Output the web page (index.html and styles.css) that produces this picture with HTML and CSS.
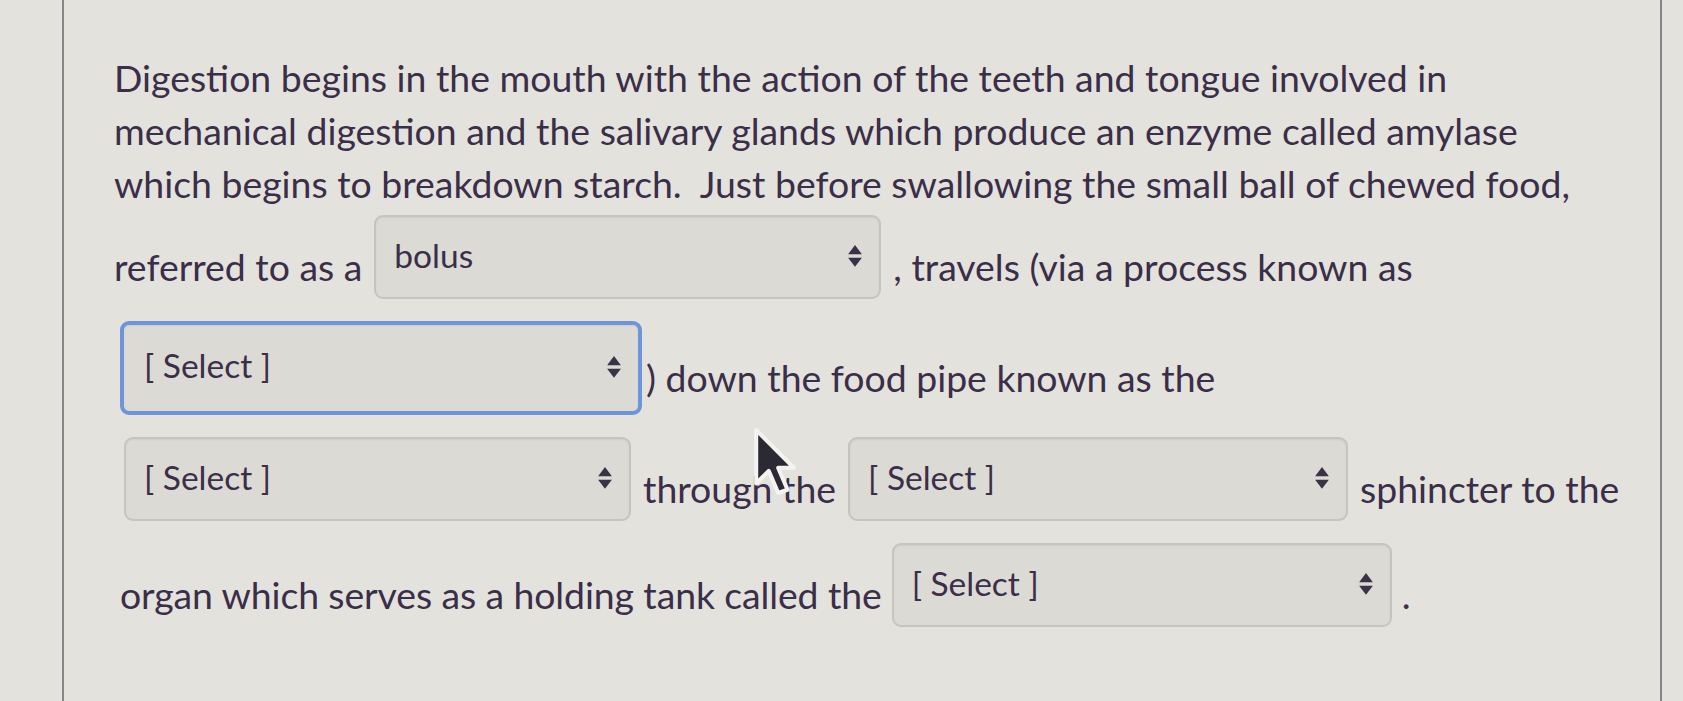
FILE: index.html
```html
<!DOCTYPE html>
<html lang="en">
<head>
  <meta charset="UTF-8" />
  <title>Digestion quiz</title>
  <link rel="stylesheet" href="styles.css">
</head>
<body>
  <div class="panel">
    <p class="text">Digestion begins in the mouth with the action of the teeth and tongue involved in<br>
      mechanical digestion and the salivary glands which produce an enzyme called amylase<br>
      which begins to breakdown starch.&nbsp; Just before swallowing the small ball of chewed food,</p>

    <div class="row">
      <span>referred to as a</span>
      <div class="select">
        <span>bolus</span>
        <svg class="arrows" viewBox="0 0 12 20"><path d="M6 0 L12 8 H0 Z M0 11 H12 L6 19 Z"/></svg>
      </div>
      <span>, travels (via a process known as</span>
    </div>

    <div class="row tight">
      <div class="select focused">
        <span>[ Select ]</span>
        <svg class="arrows" viewBox="0 0 12 20"><path d="M6 0 L12 8 H0 Z M0 11 H12 L6 19 Z"/></svg>
      </div>
      <span>) down the food pipe known as the</span>
    </div>

    <div class="row indent">
      <div class="select">
        <span>[ Select ]</span>
        <svg class="arrows" viewBox="0 0 12 20"><path d="M6 0 L12 8 H0 Z M0 11 H12 L6 19 Z"/></svg>
      </div>
      <span>through the</span>
      <div class="select short">
        <span>[ Select ]</span>
        <svg class="arrows" viewBox="0 0 12 20"><path d="M6 0 L12 8 H0 Z M0 11 H12 L6 19 Z"/></svg>
      </div>
      <span>sphincter to the</span>
    </div>

    <div class="row indent-more">
      <span>organ which serves as a holding tank called the</span>
      <div class="select short">
        <span>[ Select ]</span>
        <svg class="arrows" viewBox="0 0 12 20"><path d="M6 0 L12 8 H0 Z M0 11 H12 L6 19 Z"/></svg>
      </div>
      <span>.</span>
    </div>
  </div>

  <!-- mouse pointer -->
  <svg class="cursor" viewBox="0 0 14 22">
    <path d="M1 1 V18 L5 14 L8 21 L11 20 L8 13 H13 Z" fill="#2b2a33" stroke="#f4f3f1" stroke-width="1.3" stroke-linejoin="round"/>
  </svg>
</body>
</html>
```

FILE: styles.css
```css
* {
  box-sizing: border-box;
}

body {
  margin: 0;
  height: 701px;
  overflow: hidden;
  background: #e4e2dd;
  font-family: 'Lato', 'Open Sans', sans-serif;
  color: #3a2e48;
  position: relative;
}

.panel {
  margin-left: 62px;
  width: 1600px;
  height: 701px;
  border-left: 2px solid #8a8489;
  border-right: 2px solid #8a8489;
  padding: 51px 0 0 50px;
}

.text {
  margin: 0;
  font-size: 37.4px;
  line-height: 53px;
  white-space: nowrap;
}

.row {
  display: flex;
  align-items: flex-end;
  gap: 12px;
  margin-top: 22px;
  font-size: 37.4px;
  white-space: nowrap;
}

.text + .row {
  margin-top: 5px;
}

.row > span {
  margin-bottom: 10px;
}

.row.tight {
  gap: 4px;
}

.row.tight > span {
  margin-bottom: 15px;
}

.row.indent {
  padding-left: 10px;
}

.row.indent-more {
  padding-left: 6px;
  gap: 10px;
}

.row.indent-more > span {
  letter-spacing: -0.1px;
}

.select {
  position: relative;
  width: 507px;
  height: 84px;
  padding: 18px 0 0 18px;
  background: #dcdad5;
  border: 2px solid #c6c4bf;
  border-radius: 9px;
  box-shadow: inset 0 1px 2px rgba(0,0,0,0.06);
  font-size: 33.5px;
  flex-shrink: 0;
}

.select.short {
  width: 500px;
}

.select.focused {
  width: 522px;
  height: 94px;
  padding: 20px 0 0 20px;
  border: 4px solid #6e95d9;
  margin-left: 6px;
}

.arrows {
  position: absolute;
  right: 17px;
  top: 50%;
  width: 14px;
  height: 23px;
  margin-top: -12px;
  fill: #3a3346;
}

.cursor {
  position: absolute;
  left: 753px;
  top: 427px;
  width: 44px;
  height: 69px;
}
```
